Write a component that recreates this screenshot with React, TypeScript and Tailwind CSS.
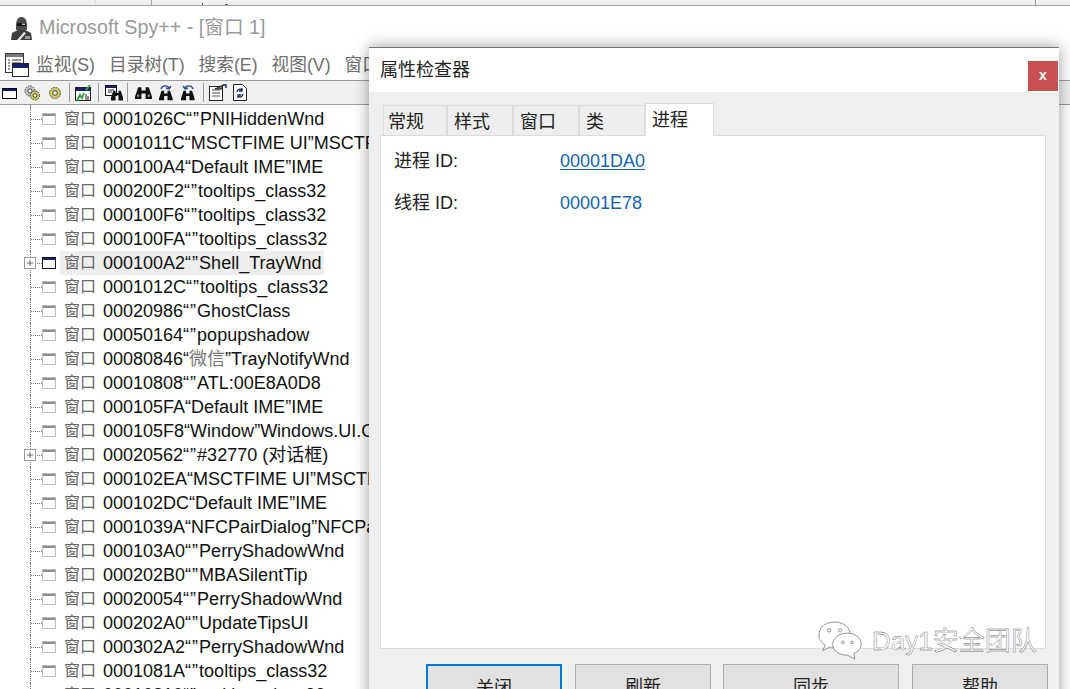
import { Plus } from 'lucide-react';

const sans = 'font-["Liberation_Sans","Noto_Sans_CJK_SC",sans-serif]';

type Row = { id: string; name: string; cls: string; plus?: boolean; selected?: boolean };

const rows: Row[] = [
  { id: '0001026C', name: '', cls: 'PNIHiddenWnd' },
  { id: '0001011C', name: 'MSCTFIME UI', cls: 'MSCTFIME UI' },
  { id: '000100A4', name: 'Default IME', cls: 'IME' },
  { id: '000200F2', name: '', cls: 'tooltips_class32' },
  { id: '000100F6', name: '', cls: 'tooltips_class32' },
  { id: '000100FA', name: '', cls: 'tooltips_class32' },
  { id: '000100A2', name: '', cls: 'Shell_TrayWnd', plus: true, selected: true },
  { id: '0001012C', name: '', cls: 'tooltips_class32' },
  { id: '00020986', name: '', cls: 'GhostClass' },
  { id: '00050164', name: '', cls: 'popupshadow' },
  { id: '00080846', name: '微信', cls: 'TrayNotifyWnd' },
  { id: '00010808', name: '', cls: 'ATL:00E8A0D8' },
  { id: '000105FA', name: 'Default IME', cls: 'IME' },
  { id: '000105F8', name: 'Window', cls: 'Windows.UI.Core' },
  { id: '00020562', name: '', cls: '#32770 (对话框)', plus: true },
  { id: '000102EA', name: 'MSCTFIME UI', cls: 'MSCTFIME UI' },
  { id: '000102DC', name: 'Default IME', cls: 'IME' },
  { id: '0001039A', name: 'NFCPairDialog', cls: 'NFCPairDialog' },
  { id: '000103A0', name: '', cls: 'PerryShadowWnd' },
  { id: '000202B0', name: '', cls: 'MBASilentTip' },
  { id: '00020054', name: '', cls: 'PerryShadowWnd' },
  { id: '000202A0', name: '', cls: 'UpdateTipsUI' },
  { id: '000302A2', name: '', cls: 'PerryShadowWnd' },
  { id: '0001081A', name: '', cls: 'tooltips_class32' },
  { id: '00010810', name: '', cls: 'tooltips_class32' },
];

const SpyIcon = () => (
  <svg width="21" height="23" viewBox="0 0 21 23">
    <path d="M5 9 C5 3 7 0 10.5 0 C14 0 16 3 16 9 L16 13 L5 13 Z" fill="#4a4a4a" />
    <rect x="6" y="6" width="9" height="3" rx="1" fill="#161616" />
    <rect x="11" y="6.5" width="3" height="1.5" fill="#bbb" />
    <path d="M0 23 L1 16 L7 13 L14 13 L20 16 L21 23 Z" fill="#3d3d3d" />
    <path d="M6 23 L13 15 L15 16 L9 23 Z" fill="#e6e6e6" />
    <rect x="14" y="19" width="5" height="3" fill="#9a9a9a" />
  </svg>
);

const MenuIcon = () => (
  <svg width="24" height="24" viewBox="0 0 24 24">
    <rect x="0.5" y="0.5" width="18" height="19" fill="#fff" stroke="#333" />
    <rect x="1" y="1" width="17" height="3" fill="#777" />
    <path d="M3 7h2M7 7h9M3 10h2M7 10h9M3 13h2M3 16h2" stroke="#333" />
    <rect x="7.5" y="10.5" width="16" height="13" fill="#fff" stroke="#222" />
    <rect x="8" y="11" width="15" height="4" fill="#16216f" />
  </svg>
);

const TbWindow = () => (
  <svg width="16" height="14" viewBox="0 0 16 14">
    <rect x="0.5" y="2.5" width="14" height="10" fill="#fff" stroke="#000" />
    <rect x="1" y="3" width="13" height="2" fill="#0a1a7a" />
  </svg>
);

const Gear = ({ x, y, r, color }: { x: number; y: number; r: number; color: string }) => (
  <g>
    <circle cx={x} cy={y} r={r} fill={color} stroke="#444" strokeDasharray="1.6 1" />
    <circle cx={x} cy={y} r={r / 2.4} fill="#fff" stroke="#444" />
  </g>
);

const TbGears = () => (
  <svg width="17" height="16" viewBox="0 0 17 16">
    <Gear x={6} y={6} r={5} color="#c4c4c4" />
    <Gear x={11} y={10.5} r={4.5} color="#cfc95a" />
  </svg>
);

const TbGear = () => (
  <svg width="14" height="14" viewBox="0 0 14 14">
    <Gear x={7} y={7} r={5.5} color="#cfc95a" />
  </svg>
);

const TbGraph = () => (
  <svg width="18" height="18" viewBox="0 0 18 18">
    <rect x="0.5" y="3.5" width="15" height="13" fill="#fff" stroke="#222" />
    <rect x="1" y="4" width="14" height="3" fill="#16216f" />
    <path d="M2 17 L5 11 L7 14 L9 9" stroke="#3aa53a" strokeWidth="2" fill="none" />
    <path d="M11 6 L15 1" stroke="#3aa53a" strokeWidth="2" />
    <path d="M11 16V10M13 16V12" stroke="#222" />
  </svg>
);

const Binoculars = () => (
  <svg width="17" height="13" viewBox="0 0 16 12">
    <path d="M3 1h3v3h4V1h3l3 9v2H10V7H6v5H0v-2z" fill="#111" />
    <rect x="2" y="8" width="2" height="2" fill="#999" />
    <rect x="12" y="8" width="2" height="2" fill="#999" />
  </svg>
);

const TbFindWin = () => (
  <svg width="18" height="16" viewBox="0 0 18 16">
    <rect x="0.5" y="0.5" width="11" height="10" fill="#fff" stroke="#111" />
    <rect x="1" y="1" width="10" height="2" fill="#16216f" />
    <path d="M3 5h6M3 7h4" stroke="#333" />
    <g transform="translate(6 5) scale(0.75)">
      <path d="M3 1h3v3h4V1h3l3 9v4H10V7H6v7H0v-4z" fill="#111" />
    </g>
  </svg>
);

const TbFindArrow = ({ flip }: { flip?: boolean }) => (
  <svg width="14" height="17" viewBox="0 0 14 17">
    <path
      d={flip ? 'M12 5 C11 1 5 1 4 4 M2 2 L4 5 L7 4' : 'M2 5 C3 1 9 1 10 4 M12 2 L10 5 L7 4'}
      stroke="#244a9a"
      strokeWidth="1.4"
      fill="none"
    />
    <g transform="translate(0 6) scale(0.85)">
      <path d="M3 1h3v3h4V1h3l3 9v2H10V7H6v5H0v-2z" fill="#111" />
    </g>
  </svg>
);

const TbProps = () => (
  <svg width="18" height="17" viewBox="0 0 18 17">
    <rect x="0.5" y="2.5" width="13" height="14" fill="#fff" stroke="#222" />
    <path d="M3 6h8M3 9h8M3 12h8" stroke="#555" />
    <path d="M6 5 L14 1 L13 5 Z" fill="#777" stroke="#222" />
    <path d="M14 1 L17 1 L17 4" stroke="#16216f" strokeWidth="1.4" fill="none" />
  </svg>
);

const TbRefresh = () => (
  <svg width="14" height="17" viewBox="0 0 14 17">
    <path d="M0.5 0.5H9.5L13.5 4.5V16.5H0.5Z" fill="#fff" stroke="#222" />
    <path d="M4 8 A3 3 0 0 1 9 6 M9 4v3H6" stroke="#16216f" strokeWidth="1.3" fill="none" />
    <path d="M10 10 A3 3 0 0 1 5 12 M5 14v-3h3" stroke="#16216f" strokeWidth="1.3" fill="none" />
  </svg>
);

const Sep = () => <div className="h-[19px] w-px bg-[#9a9a9a]" />;

const WinGlyph = ({ active }: { active?: boolean }) => (
  <div
    className={`flex h-[12px] w-[14px] flex-col border ${
      active ? 'border-[#111] bg-white' : 'border-[#bdbdbd] bg-white'
    }`}
  >
    <div className={active ? 'h-[2px] bg-[#16216f]' : 'h-[2px] bg-[#8c8c8c]'} />
  </div>
);

const TreeRow = ({ row }: { row: Row }) => (
  <div className="relative flex h-6 items-center pl-[42px]">
    {/* tree connector */}
    <div className="absolute left-[30px] top-0 h-full border-l border-dotted border-[#777]" />
    <div className="absolute left-[31px] top-[12px] w-[11px] border-t border-dotted border-[#777]" />
    {row.plus && (
      <div className="absolute left-[24px] top-[6px] flex h-[12px] w-[12px] items-center justify-center border border-[#999] bg-white">
        <Plus size={10} strokeWidth={1.5} color="#222" />
      </div>
    )}
    <WinGlyph active={row.selected} />
    <div className={`ml-[4px] flex h-6 items-center pl-[4px] ${row.selected ? 'bg-[#eeeeee] pr-[2px]' : ''}`}>
      <span className="whitespace-nowrap text-[16px] text-[#666]">窗口</span>
      <span className={`ml-[7px] whitespace-nowrap text-[18px] text-[#111] ${sans}`}>
        {row.id}
        {row.name === '' ? (
          <span className="tracking-[1px]">“”</span>
        ) : (
          <>
            “{row.name === '微信' ? <span className="text-[#777]">{row.name}</span> : row.name}”
          </>
        )}
        {row.cls}
      </span>
    </div>
  </div>
);

const Tab = ({ label, active, width, pad }: { label: string; active?: boolean; width: string; pad: string }) => (
  <div
    className={`${width} ${pad} flex shrink-0 text-[18px] text-[#222] ${
      active
        ? 'z-10 -mb-px -mt-px h-[33px] items-start border-x border-t border-[#ddd] bg-white leading-[32px]'
        : 'h-[30px] items-center border-l border-r border-t border-[#dcdcdc] bg-[#eeeeee] pt-[4px]'
    }`}
  >
    {label}
  </div>
);

const DialogButton = ({ label, width, focus }: { label: string; width: string; focus?: boolean }) => (
  <div
    className={`${width} flex h-[40px] shrink-0 justify-center bg-[#e1e1e1] pt-[9px] text-[18px] text-[#222] ${
      focus ? 'border-2 border-[#0078d7]' : 'border border-[#adadad]'
    }`}
  >
    {label}
  </div>
);

const WeChatMark = () => (
  <svg width="46" height="39" viewBox="0 0 50 42">
    <path
      d="M18 1 C8 1 1 7 1 15 C1 20 4 24 8 26 L5 32 L13 28 C15 29 17 29 19 29 C28 29 35 23 35 15 C35 7 28 1 18 1 Z"
      fill="#fff"
      stroke="#8a8a8a"
    />
    <path
      d="M32 13 C22 13 16 19 16 25 C16 32 23 37 32 37 L40 41 L39 35 C44 33 47 29 47 25 C47 19 41 13 32 13 Z"
      fill="#fff"
      stroke="#8a8a8a"
    />
    <circle cx="12" cy="10" r="1.8" fill="#fff" stroke="#8a8a8a" />
    <circle cx="24" cy="10" r="1.8" fill="#fff" stroke="#8a8a8a" />
    <circle cx="27" cy="23" r="1.5" fill="#fff" stroke="#8a8a8a" />
    <circle cx="37" cy="23" r="1.5" fill="#fff" stroke="#8a8a8a" />
  </svg>
);

export default function App() {
  return (
    <div className={`relative h-[689px] w-[1070px] overflow-hidden bg-white ${sans}`}>
      {/* sliver of the window behind */}
      <div className="flex h-[6px] border-b border-[#a5a5a5] bg-[#f0f0f0]">
        <div className="w-[96px] border-r border-[#ddd]" />
        <div className="w-[56px] border-r border-[#aaa]" />
        <div className="flex w-[884px] items-end border-r border-[#999] pl-[50px]">
          <div className="h-[2px] w-px bg-[#555]" />
          <div className="ml-[22px] h-px w-[3px] bg-[#666]" />
        </div>
      </div>

      {/* title */}
      <div className="flex h-[44px] items-center pl-[11px]">
        <SpyIcon />
        <span className="ml-[7px] text-[19.7px] text-[#9a9a9a]">Microsoft Spy++ - [窗口 1]</span>
      </div>

      {/* menu bar */}
      <div className="flex h-[30px] items-center pl-[5px] text-[17.7px] text-[#6e6e6e]">
        <MenuIcon />
        <div className="ml-[7px] mt-[1px] flex gap-[14px]">
          <span>监视(S)</span>
          <span>目录树(T)</span>
          <span>搜索(E)</span>
          <span>视图(V)</span>
          <span>窗口(W)</span>
        </div>
      </div>

      {/* toolbar */}
      <div className="flex h-[25px] items-center border-y border-[#9c9c9c] bg-[#f0f0f0] pl-[2px]">
        <TbWindow />
        <span className="ml-[6px]"><TbGears /></span>
        <span className="ml-[7px]"><TbGear /></span>
        <span className="ml-[7px]"><Sep /></span>
        <span className="ml-[5px]"><TbGraph /></span>
        <span className="ml-[5px]"><Sep /></span>
        <span className="ml-[6px]"><TbFindWin /></span>
        <span className="ml-[4px]"><Sep /></span>
        <span className="ml-[7px]"><Binoculars /></span>
        <span className="ml-[7px]"><TbFindArrow /></span>
        <span className="ml-[8px]"><TbFindArrow flip /></span>
        <span className="ml-[8px]"><Sep /></span>
        <span className="ml-[5px]"><TbProps /></span>
        <span className="ml-[6px]"><TbRefresh /></span>
      </div>

      {/* window tree */}
      <div>
        <div className="ml-[30px] h-[2px] border-l border-dotted border-[#777]" />
        {rows.map((row) => (
          <TreeRow key={row.id} row={row} />
        ))}
      </div>

      {/* property inspector dialog */}
      <div className="absolute left-[369px] top-[47px] flex h-[660px] w-[690px] flex-col bg-[#efefef] shadow-[0_0_14px_rgba(0,0,0,0.4)]">
        <div className="flex h-[45px] shrink-0 items-center justify-between border-t border-[#777] bg-white pl-[11px] pr-[1px]">
          <span className="text-[18px] text-[#222]">属性检查器</span>
          <div className="mt-[11px] flex h-[30px] w-[30px] items-center justify-center bg-[#c75050] text-[14px] font-bold text-white">
            x
          </div>
        </div>

        <div className="flex h-[43px] shrink-0 items-end pl-[14px]">
          <Tab label="常规" width="w-[64px]" pad="pl-[4px]" />
          <Tab label="样式" width="w-[66px]" pad="pl-[6px]" />
          <Tab label="窗口" width="w-[66px]" pad="pl-[6px]" />
          <Tab label="类" width="w-[66px]" pad="pl-[6px]" />
          <Tab label="进程" active width="w-[69px]" pad="pl-[6px]" />
        </div>

        <div className="ml-[11px] h-[514px] w-[666px] shrink-0 border border-[#dcdcdc] bg-white pl-[13px] pt-[13px] text-[18px]">
          <div className="flex h-[24px] items-center">
            <span className="w-[166px] text-[#222]">进程 ID:</span>
            <span className="text-[#1565b0] underline underline-offset-2">00001DA0</span>
          </div>
          <div className="mt-[18px] flex h-[24px] items-center">
            <span className="w-[166px] text-[#222]">线程 ID:</span>
            <span className="text-[#1565b0]">00001E78</span>
          </div>
        </div>

        <div className="mt-[15px] flex pl-[57px]">
          <DialogButton label="关闭" width="w-[136px]" focus />
          <div className="ml-[13px]"><DialogButton label="刷新" width="w-[136px]" /></div>
          <div className="ml-[12px]"><DialogButton label="同步" width="w-[176px]" /></div>
          <div className="ml-[13px]"><DialogButton label="帮助" width="w-[136px]" /></div>
        </div>
      </div>

      {/* watermark */}
      <div className="absolute left-[818px] top-[619px] flex items-center gap-[8px]">
        <WeChatMark />
        <span className="mt-[3px] text-[26px] text-white [-webkit-text-stroke:0.4px_#666]">Day1安全团队</span>
      </div>
    </div>
  );
}
